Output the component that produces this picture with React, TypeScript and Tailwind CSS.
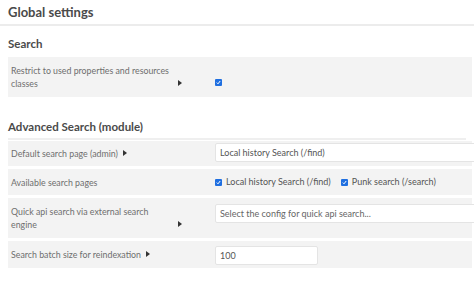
import type { ReactNode } from "react";

const Arrow = () => (
  <svg width="4" height="6" viewBox="0 0 4 6" className="shrink-0">
    <path d="M0 0 L4 3 L0 6 Z" fill="#333" />
  </svg>
);

const Check = () => (
  <span className="inline-flex w-[7px] h-[7px] items-center justify-center rounded-[1px] bg-[#1f6fe0] shrink-0">
    <svg width="5" height="5" viewBox="0 0 5 5">
      <path d="M0.8 2.6 L2 3.8 L4.2 1" stroke="#fff" strokeWidth="1" fill="none" />
    </svg>
  </span>
);

type RowProps = {
  label: string;
  h: string;
  top: string;
  wrap?: boolean;
  children: ReactNode;
};

const Row = ({ label, h, top, wrap, children }: RowProps) => (
  <div className={`flex items-start bg-[#f3f3f3] w-[464px] ${h}`}>
    <div className="w-[207px] shrink-0 h-full flex items-center pl-[3px]">
      <div className="flex items-end gap-[5px]">
        <span className={`text-[8.8px] leading-[13px] text-[#6e6e6e] ${wrap ? "w-[162px]" : ""}`}>
          {label}
        </span>
        <span className="mb-[4px]">
          <Arrow />
        </span>
      </div>
    </div>
    <div className={`flex-1 min-w-0 ${top}`}>{children}</div>
  </div>
);

const Input = ({ value, w, muted }: { value: string; w: string; muted?: boolean }) => (
  <div
    className={`${w} shrink-0 h-[19px] bg-white border border-[#e4e4e4] rounded-[2px] flex items-center pl-[4px] text-[9px] whitespace-nowrap ${
      muted ? "text-[#666]" : "text-[#555]"
    }`}
  >
    {value}
  </div>
);

export default function App() {
  return (
    <div className="w-[474px] h-[281px] bg-white overflow-hidden font-['Lato',sans-serif]">
      <div className="h-[26px] border-b-[2px] border-[#ececec] px-[8px] pt-[3px]">
        <h1 className="text-[13px] font-bold text-[#4a4a4a] leading-[18px]">Global settings</h1>
      </div>

      <div className="px-[8px]">
        <h2 className="text-[11.5px] font-bold text-[#4a4a4a] leading-[16px] mt-[10px] mb-[5px]">Search</h2>
        <Row label="Restrict to used properties and resources classes" h="h-[40px]" top="pt-[10px]" wrap>
          <Check />
        </Row>

        <h2 className="text-[11.5px] font-bold text-[#4a4a4a] leading-[16px] mt-[22px] pb-[3px] border-b-[2px] border-[#efefef]">
          Advanced Search (module)
        </h2>

        <div className="flex flex-col gap-[3px] mt-[1px]">
          <Row label="Default search page (admin)" h="h-[25px]" top="pt-[2px]">
            <Input value="Local history Search (/find)" w="w-[270px]" />
          </Row>
          <div className="flex items-center bg-[#f3f3f3] w-[464px] h-[26px]">
            <div className="w-[207px] shrink-0 pl-[3px] text-[8.8px] leading-[13px] text-[#6e6e6e]">
              Available search pages
            </div>
            <div className="flex items-center text-[9px] text-[#555]">
              <Check />
              <span className="ml-[4px]">Local history Search (/find)</span>
              <span className="ml-[10px]">
                <Check />
              </span>
              <span className="ml-[4px]">Punk search (/search)</span>
            </div>
          </div>
          <Row label="Quick api search via external search engine" h="h-[40px]" top="pt-[6px]" wrap>
            <Input value="Select the config for quick api search..." w="w-[270px]" muted />
          </Row>
          <Row label="Search batch size for reindexation" h="h-[27px]" top="pt-[5px]">
            <Input value="100" w="w-[103px]" />
          </Row>
        </div>
      </div>
    </div>
  );
}
